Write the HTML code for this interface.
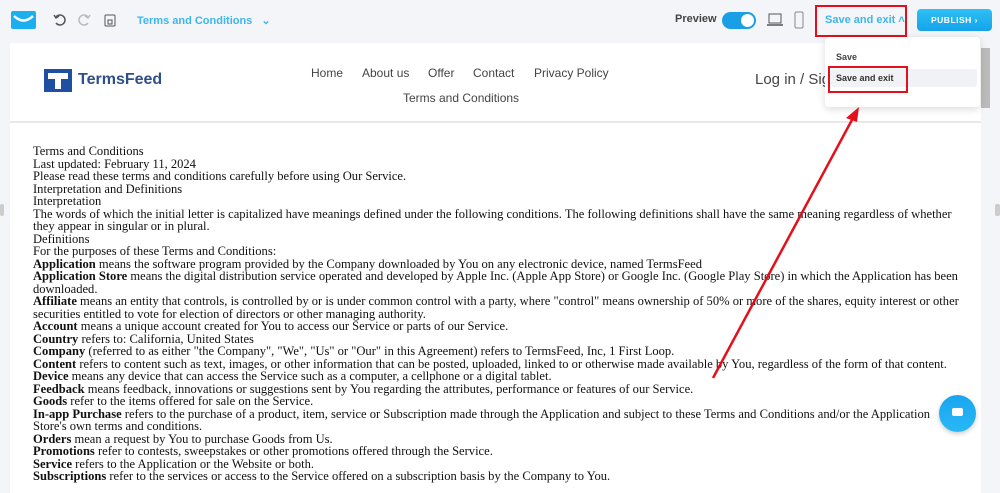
<!DOCTYPE html>
<html><head><style>
body{margin:0;width:1000px;height:480px;overflow:hidden;background:#f3f5f8;font-family:"Liberation Sans",sans-serif;position:relative}
.top{position:absolute;left:0;top:0;width:1000px;height:42px}
.card{position:absolute;left:10px;top:43px;width:971px;height:450px;background:#fff}
.nav a{position:absolute;font-size:12px;color:#444}
.doc{position:absolute;left:33px;top:145px;width:928px;font-family:"Liberation Serif",serif;font-size:12.55px;line-height:12.52px;color:#111}
.doc b{font-weight:bold}
</style></head><body>
<div class="top">
<svg style="position:absolute;left:11px;top:11px" width="25" height="18"><rect width="25" height="18" rx="2" fill="#1ab0ef"/><path d="M3 5 Q12.5 14 22 5" stroke="#fff" stroke-width="2.5" fill="none"/></svg>
<svg style="position:absolute;left:53px;top:13px" width="14" height="14"><path d="M3 4 A5 5 0 1 1 3 10" stroke="#555" stroke-width="1.5" fill="none"/><path d="M1 2 L3 5 L6 3" stroke="#555" stroke-width="1.5" fill="none"/></svg>
<svg style="position:absolute;left:77px;top:13px" width="14" height="14"><path d="M11 4 A5 5 0 1 0 11 10" stroke="#bbb" stroke-width="1.5" fill="none"/><path d="M13 2 L11 5 L8 3" stroke="#bbb" stroke-width="1.5" fill="none"/></svg>
<svg style="position:absolute;left:104px;top:14px" width="12" height="13"><rect x="1" y="1" width="10" height="11" rx="1" stroke="#555" fill="none"/><rect x="4" y="6" width="4" height="4" stroke="#555" fill="none"/></svg>
<div style="position:absolute;left:137px;top:14px;font-size:11px;font-weight:bold;color:#3fb6ea">Terms and Conditions <span style="margin-left:6px">⌄</span></div>
<div style="position:absolute;left:675px;top:13px;font-size:11px;font-weight:bold;color:#444">Preview</div>
<div style="position:absolute;left:722px;top:12px;width:34px;height:17px;border-radius:9px;background:#1a9ee6"><div style="position:absolute;right:2px;top:2px;width:13px;height:13px;border-radius:50%;background:#fff"></div></div>
<svg style="position:absolute;left:766px;top:13px" width="18" height="14"><rect x="3" y="1" width="12" height="9" stroke="#555" fill="none"/><path d="M1 12 H17" stroke="#555" stroke-width="1.5"/></svg>
<svg style="position:absolute;left:794px;top:11px" width="10" height="18"><rect x="1" y="1" width="8" height="16" rx="1.5" stroke="#888" fill="none"/></svg>
<div style="position:absolute;left:815px;top:5px;width:92px;height:32px;border:2px solid #e3101b;box-sizing:border-box"></div>
<div style="position:absolute;left:825px;top:14px;font-size:11px;font-weight:bold;color:#3fb6ea">Save and exit ˄</div>
<div style="position:absolute;left:917px;top:9px;width:75px;height:22px;border-radius:4px;background:linear-gradient(#2ec0f5,#14a3ea);color:#fff;font-size:8.5px;font-weight:bold;line-height:22px;text-align:center;letter-spacing:.5px">PUBLISH ›</div>
</div>
<div style="position:absolute;left:981px;top:48px;width:9px;height:60px;background:#bbb"></div>
<div class="card">
<svg style="position:absolute;left:34px;top:26px" width="28" height="23"><rect width="28" height="23" fill="#1f4fa3"/><path d="M4 4 H24 V10 H17 V20 H11 V10 H4Z" fill="#fff"/></svg>
<div style="position:absolute;left:68px;top:28px;font-size:16px;font-weight:bold;color:#2f4f88">TermsFeed</div>
<div class="nav"><a style="left:301px;top:23px">Home</a><a style="left:352px;top:23px">About us</a><a style="left:418px;top:23px">Offer</a><a style="left:463px;top:23px">Contact</a><a style="left:524px;top:23px">Privacy Policy</a><a style="left:393px;top:48px">Terms and Conditions</a></div>
<div style="position:absolute;left:745px;top:28px;font-size:15px;color:#444">Log in / Sig</div>
<div style="position:absolute;left:0;top:78px;width:971px;height:2px;background:#e8e8e8"></div>
</div>
<div style="position:absolute;left:0;top:204px;width:4px;height:12px;background:#ccc;border-radius:2px"></div>
<div style="position:absolute;left:995px;top:204px;width:5px;height:12px;background:#ccc;border-radius:2px"></div>
<div class="doc">Terms and Conditions<br>Last updated: February 11, 2024<br>Please read these terms and conditions carefully before using Our Service.<br>Interpretation and Definitions<br>Interpretation<br>The words of which the initial letter is capitalized have meanings defined under the following conditions. The following definitions shall have the same meaning regardless of whether they appear in singular or in plural.<br>Definitions<br>For the purposes of these Terms and Conditions:<br><b>Application</b> means the software program provided by the Company downloaded by You on any electronic device, named TermsFeed<br><b>Application Store</b> means the digital distribution service operated and developed by Apple Inc. (Apple App Store) or Google Inc. (Google Play Store) in which the Application has been downloaded.<br><b>Affiliate</b> means an entity that controls, is controlled by or is under common control with a party, where "control" means ownership of 50% or more of the shares, equity interest or other securities entitled to vote for election of directors or other managing authority.<br><b>Account</b> means a unique account created for You to access our Service or parts of our Service.<br><b>Country</b> refers to: California, United States<br><b>Company</b> (referred to as either "the Company", "We", "Us" or "Our" in this Agreement) refers to TermsFeed, Inc, 1 First Loop.<br><b>Content</b> refers to content such as text, images, or other information that can be posted, uploaded, linked to or otherwise made available by You, regardless of the form of that content.<br><b>Device</b> means any device that can access the Service such as a computer, a cellphone or a digital tablet.<br><b>Feedback</b> means feedback, innovations or suggestions sent by You regarding the attributes, performance or features of our Service.<br><b>Goods</b> refer to the items offered for sale on the Service.<br><b>In-app Purchase</b> refers to the purchase of a product, item, service or Subscription made through the Application and subject to these Terms and Conditions and/or the Application Store's own terms and conditions.<br><b>Orders</b> mean a request by You to purchase Goods from Us.<br><b>Promotions</b> refer to contests, sweepstakes or other promotions offered through the Service.<br><b>Service</b> refers to the Application or the Website or both.<br><b>Subscriptions</b> refer to the services or access to the Service offered on a subscription basis by the Company to You.</div>
<div style="position:absolute;left:825px;top:37px;width:155px;height:70px;background:#fff;border-radius:4px;box-shadow:0 2px 8px rgba(0,0,0,.15)">
<div style="position:absolute;left:11px;top:15px;font-size:9px;font-weight:bold;color:#444">Save</div>
<div style="position:absolute;left:6px;top:32px;width:146px;height:18px;background:#f1f2f5;border-radius:3px"></div>
<div style="position:absolute;left:3px;top:29px;width:80px;height:27px;border:2px solid #e3101b;box-sizing:border-box"></div>
<div style="position:absolute;left:11px;top:36px;font-size:9px;font-weight:bold;color:#333">Save and exit</div>
</div>
<svg style="position:absolute;left:0;top:0" width="1000" height="480"><line x1="713" y1="378" x2="853" y2="118" stroke="#e3101b" stroke-width="2.5"/><path d="M859 107 L846 118 L857 122Z" fill="#e3101b"/></svg>
<div style="position:absolute;left:939px;top:395px;width:37px;height:37px;border-radius:50%;background:linear-gradient(#1aa5f0,#28b8f5);box-shadow:0 2px 5px rgba(0,0,0,.2)"><div style="position:absolute;left:13px;top:13px;width:11px;height:8px;background:#fff;border-radius:2px"></div></div>
</body></html>
